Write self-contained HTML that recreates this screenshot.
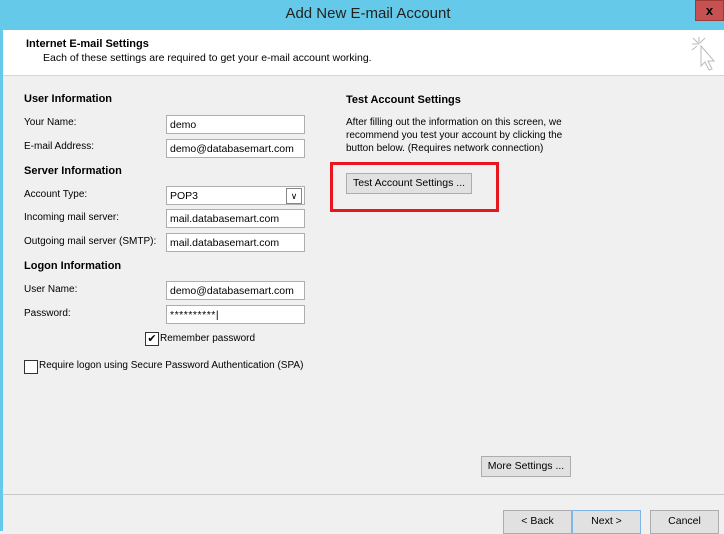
<!DOCTYPE html>
<html><head><style>
body{margin:0;width:724px;height:531px;overflow:hidden;background:#f0f0f0;font-family:"Liberation Sans",Tahoma,sans-serif;font-size:10px;color:#000;position:relative}
.a{position:absolute;white-space:nowrap}
.b{font-weight:bold;font-size:11px}
.in{position:absolute;left:166px;width:134px;height:17px;background:#fff;border:1px solid #aeaeae;line-height:18px;padding-left:3px;box-sizing:content-box;font-size:10.5px}
.btn{position:absolute;background:#e1e1e1;border:1px solid #adadad;text-align:center;line-height:19px;height:19px;font-size:10.5px}
</style></head><body>
<div class="a" style="left:0;top:0;width:724px;height:30px;background:#65caea"></div>
<div class="a" style="left:0;top:0;width:3px;height:531px;background:#65caea"></div>
<div class="a" style="left:695px;top:0;width:29px;height:21px;background:#c75050;border:1px solid #9c3a3a;box-sizing:border-box;color:#000;font-weight:bold;font-size:13px;text-align:center;line-height:19px">x</div>
<div class="a" style="left:0;top:5px;width:736px;text-align:center;font-size:15px;color:#222">Add New E-mail Account</div>
<div class="a" style="left:3px;top:30px;width:721px;height:45px;background:#fff;border-bottom:1px solid #d5d5d5"></div>
<div class="a b" style="left:26px;top:38px">Internet E-mail Settings</div>
<div class="a" style="left:43px;top:52px;font-size:10.5px">Each of these settings are required to get your e-mail account working.</div>
<svg class="a" style="left:688px;top:34px" width="32" height="40" viewBox="0 0 32 40" fill="none" stroke="#bbb" stroke-width="1"><path d="M11 3v7M4 10h7M5 4l5 5M17 4l-5 5M4 16l5-4"/><path d="M13 12v20l4-4 4 8 3-1-4-8 6 0z" fill="#fff"/></svg>
<div class="a b" style="left:24px;top:93px">User Information</div>
<div class="a" style="left:24px;top:117px">Your Name:</div>
<div class="a" style="left:24px;top:141px">E-mail Address:</div>
<div class="a b" style="left:24px;top:165px">Server Information</div>
<div class="a" style="left:24px;top:189px">Account Type:</div>
<div class="a" style="left:24px;top:212px">Incoming mail server:</div>
<div class="a" style="left:24px;top:236px">Outgoing mail server (SMTP):</div>
<div class="a b" style="left:24px;top:260px">Logon Information</div>
<div class="a" style="left:24px;top:284px">User Name:</div>
<div class="a" style="left:24px;top:308px">Password:</div>
<div class="in" style="top:115px">demo</div>
<div class="in" style="top:139px">demo@databasemart.com</div>
<div class="in" style="top:186px">POP3</div>
<div class="a" style="left:286px;top:188px;width:14px;height:14px;border:1px solid #888;background:#fff;font-size:9px;text-align:center;line-height:14px">&#8744;</div>
<div class="in" style="top:209px">mail.databasemart.com</div>
<div class="in" style="top:233px">mail.databasemart.com</div>
<div class="in" style="top:281px">demo@databasemart.com</div>
<div class="in" style="top:305px;letter-spacing:0.5px">**********|</div>
<div class="a" style="left:145px;top:332px;width:12px;height:12px;border:1px solid #333;background:#fff;font-size:11px;line-height:12px;text-align:center">&#10004;</div>
<div class="a" style="left:160px;top:333px">Remember password</div>
<div class="a" style="left:24px;top:360px;width:12px;height:12px;border:1px solid #333;background:#fff"></div>
<div class="a" style="left:39px;top:360px">Require logon using Secure Password Authentication (SPA)</div>
<div class="a b" style="left:346px;top:94px">Test Account Settings</div>
<div class="a" style="left:346px;top:116px;line-height:13px">After filling out the information on this screen, we<br>recommend you test your account by clicking the<br>button below. (Requires network connection)</div>
<div class="a" style="left:330px;top:162px;width:169px;height:50px;border:3px solid #e8161f;box-sizing:border-box"></div>
<div class="btn" style="left:346px;top:173px;width:124px">Test Account Settings ...</div>
<div class="btn" style="left:481px;top:456px;width:88px">More Settings ...</div>
<div class="a" style="left:3px;top:494px;width:721px;height:1px;background:#c8c8c8"></div>
<div class="btn" style="left:503px;top:510px;width:67px;height:22px;line-height:21px">&lt; Back</div>
<div class="btn" style="left:572px;top:510px;width:67px;height:22px;line-height:21px;border-color:#7eb4ea">Next &gt;</div>
<div class="btn" style="left:650px;top:510px;width:67px;height:22px;line-height:21px">Cancel</div>
</body></html>
